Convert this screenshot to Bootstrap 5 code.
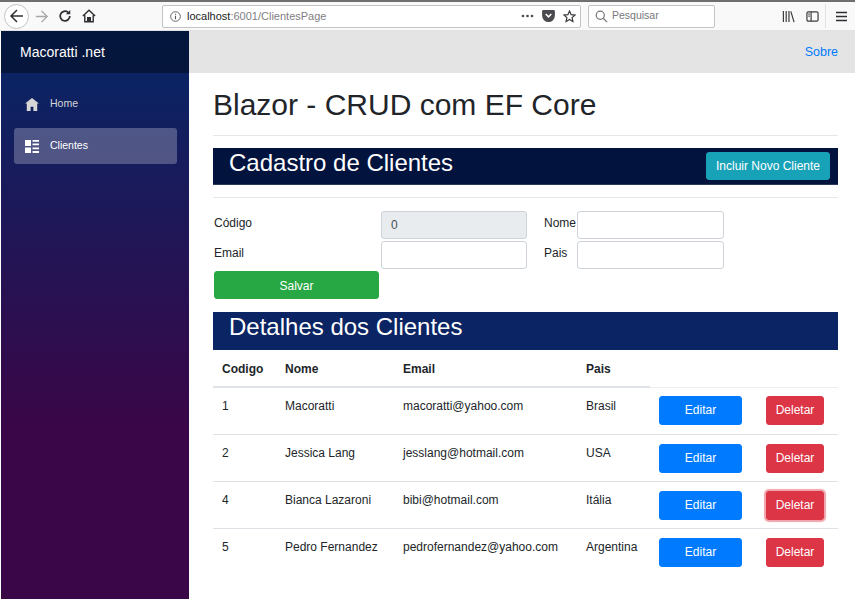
<!DOCTYPE html>
<html lang="pt">
<head>
<meta charset="utf-8">
<title>Blazor - CRUD com EF Core</title>
<link rel="stylesheet" href="https://cdn.jsdelivr.net/npm/bootstrap@5.3.0/dist/css/bootstrap.min.css">
<style>
html,body{height:100%;overflow:hidden}
body{font-family:"Liberation Sans",Arial,sans-serif;font-size:12px;color:#212529;background:#fff;width:855px;height:599px}
.tb-bar{height:31px;background:#f9f9fa;border-top:2px solid #6f6f6f;border-bottom:1px solid #e2e2e3;padding-left:4px}
.tb-back{width:25px;height:25px;border:1px solid #c4c4c6;border-radius:50%;background:#fff}
.tb-ic{display:flex;align-items:center;justify-content:center;width:24px;height:24px;color:#3d3d40}
.tb-url{width:419px;height:23px;margin-left:61px;background:#fff;border:1px solid #c3c3c6;border-radius:2px;font-size:11px;color:#808085;padding:0 4px 0 7px}
.tb-url b{font-weight:400;color:#1c1b22}
.tb-info{margin-right:6px}
.tb-search{width:127px;height:23px;margin-left:7px;background:#fff;border:1px solid #c3c3c6;border-radius:2px;font-size:10.5px;color:#77777c;padding:0 6px}
.tb-end{margin-left:auto;padding-right:2px}
.tb-sep{width:1px;height:24px;background:#e2e2e3;margin:0 3px 0 1px}
.app-shell{height:568px}
.side-col{width:188px;margin-left:1px;flex:none;background:linear-gradient(180deg,#052767 0%,#3a0647 70%)}
.side-brand{height:42px;background:rgba(0,0,0,.4);color:#fff;font-size:14px;padding-left:19px}
.side-nav{padding-top:13px;padding-left:13px;padding-right:12px}
.side-link{height:36px;margin-bottom:6px;font-size:10.5px;color:#d7d7d7;border-radius:3px;padding-left:11px;gap:11px}
.side-link.is-on{background:rgba(255,255,255,.25);color:#fff}
.main-col{min-width:0}
.top-strip{height:42px;background:#e4e4e4;padding-right:17px}
.top-strip a{font-size:12.5px;color:#007bff;text-decoration:none}
.page-body{padding:0 17px 0 24px}
.page-title{font-size:30px;line-height:36px;font-weight:400;margin:14px 0 12px}
.rule-line{height:1px;background:#e6e6e6;margin:0}
.rule-gap{margin-top:12px}
.band{height:37px;padding:0 8px 0 16px;color:#fff;font-size:24px;line-height:30px}
.band-a{background:#02133e;margin-top:12px;border-bottom:1px solid #2c3a5e}
.band-b{background:#0b2463;height:38px;margin-top:13px;line-height:30px}
.band span{display:block;align-self:flex-start}
.btn-add{font-size:12px;line-height:14px;height:28px;padding:0 9px;background:#17a2b8;border-color:#17a2b8;color:#fff;border-radius:3px;margin-top:4px}
.form-area{display:grid;grid-template-columns:167px 147px 16px 33px 147px;grid-auto-rows:28px;row-gap:2px;margin-top:13px;padding-left:1px}
.form-area label{padding-top:3px;white-space:nowrap}
.form-area input{height:28px;font-size:12px;padding:0 9px;border:1px solid #ced4da;border-radius:3px;color:#495057;width:146px}
.form-area input.wide-in{width:147px}
.form-area input:disabled{background:#e9ecef}
.gap-cell{grid-column:3}
.btn-save{grid-column:1;width:165px;height:28px;font-size:12px;padding:1px 0 0;background:#28a745;border-color:#28a745;color:#fff;border-radius:3px}
.data-grid{width:625px;table-layout:fixed;font-size:12px;margin:0;border-collapse:collapse}
.data-grid th{height:37px;padding:2px 9px 0;vertical-align:middle;font-size:12px;border-bottom:2px solid #dee2e6;color:#212529}
.data-grid th.th-soft{border-bottom:1px solid #eceeef}
.data-grid td{height:47px;padding:9px 9px 0;vertical-align:top;border-bottom:1px solid #dee2e6;color:#212529}
.data-grid tr:last-child td{border-bottom:0}
.data-grid td.act{padding-top:9px}
.data-grid tr:first-child td.act{padding-top:8px}
.btn-edit,.btn-del{height:29px;font-size:12px;padding:0;border-radius:3px;color:#fff}
.btn-edit{width:83px;background:#007bff;border-color:#007bff}
.btn-del{width:58px;background:#dc3545;border-color:#dc3545}
.btn-glow{box-shadow:0 0 1px 2px rgba(220,53,69,.45)}
</style>
</head>
<body>
<div class="tb-bar d-flex align-items-center">
  <span class="tb-back d-flex align-items-center justify-content-center"><svg width="16" height="16" viewBox="0 0 16 16" fill="none" stroke="#2f2f33" stroke-width="1.5"><path d="M14 8H2M8 2 2 8l6 6"/></svg></span>
  <span class="tb-ic"><svg width="15" height="15" viewBox="0 0 16 16" fill="none" stroke="#a8a8ab" stroke-width="1.5"><path d="M2 8h12M8 2l6 6-6 6"/></svg></span>
  <span class="tb-ic"><svg width="14" height="14" viewBox="0 0 16 16" fill="none" stroke="#2f2f33" stroke-width="2"><path d="M13.500 8A5.500 5.500 0 1 1 11.500 3.800"/><path d="M14 1v5H9" fill="#2f2f33" stroke="none"/></svg></span>
  <span class="tb-ic"><svg width="14" height="14" viewBox="0 0 16 16" fill="none" stroke="#2f2f33" stroke-width="1.600"><path d="M1 8l7-6.500L15 8M3.200 7v7.500h9.600V7"/><path d="M6.500 14.500V10h3v4.500" fill="#2f2f33"/></svg></span>
  <div class="tb-url d-flex align-items-center">
    <svg class="tb-info" width="11" height="11" viewBox="0 0 16 16" fill="none" stroke="#55555a" stroke-width="1.300"><circle cx="8" cy="8" r="7"/><path d="M8 7v5M8 4v1.600" stroke-width="1.600"/></svg>
    <span><b>localhost</b>:6001/ClientesPage</span>
    <span class="ms-auto d-flex align-items-center gap-2">
      <svg width="13" height="4" viewBox="0 0 13 4" fill="#4a4a4f"><circle cx="2" cy="2" r="1.300"/><circle cx="6.500" cy="2" r="1.300"/><circle cx="11" cy="2" r="1.300"/></svg>
      <svg width="13" height="12" viewBox="0 0 16 15"><path d="M1.500 0h13A1.500 1.500 0 0 1 16 1.500V7a8 8 0 0 1-16 0V1.500A1.500 1.500 0 0 1 1.500 0z" fill="#4a4a4f"/><path d="M4.500 5 8 8.500 11.500 5" fill="none" stroke="#fff" stroke-width="2"/></svg>
      <svg width="13" height="13" viewBox="0 0 16 16" fill="none" stroke="#3a3a3f" stroke-width="1.500"><path d="M8 1.300l2 4.400 4.800.5-3.600 3.200 1 4.700L8 11.700l-4.200 2.400 1-4.700L1.200 6.200 6 5.700z"/></svg>
    </span>
  </div>
  <div class="tb-search d-flex align-items-center gap-1">
    <svg width="13" height="13" viewBox="0 0 16 16" fill="none" stroke="#77777c" stroke-width="1.500"><circle cx="6.500" cy="6.500" r="5"/><path d="M10.200 10.200 15 15"/></svg>
    <span>Pesquisar</span>
  </div>
  <div class="tb-end d-flex align-items-center">
    <span class="tb-ic"><svg width="13" height="13" viewBox="0 0 14 14" fill="none" stroke="#3d3d40" stroke-width="1.300"><path d="M1.500 1v12M4.500 1v12M7.500 1v12M9.500 1.500l3.500 11.500"/></svg></span>
    <span class="tb-ic"><svg width="13" height="13" viewBox="0 0 14 14" fill="none" stroke="#3d3d40" stroke-width="1.300"><rect x="1" y="2" width="12" height="10" rx="1.500"/><path d="M5.500 2v10"/><path d="M2.500 4.500h1.500M2.500 6.500h1.500"/></svg></span>
    <span class="tb-sep"></span>
    <span class="tb-ic"><svg width="13" height="11" viewBox="0 0 13 11" fill="none" stroke="#2f2f33" stroke-width="1.500"><path d="M1 1.500h11M1 5.500h11M1 9.500h11"/></svg></span>
  </div>
</div>
<div class="app-shell d-flex">
  <aside class="side-col">
    <div class="side-brand d-flex align-items-center">Macoratti .net</div>
    <nav class="side-nav">
      <div class="side-link d-flex align-items-center">
        <svg width="14" height="13" viewBox="0 0 8 7.500" fill="#d7d7d7"><path d="M4 0 0 3.200h1v4.300h2.200V5h1.600v2.500H7V3.200h1z"/></svg><span>Home</span>
      </div>
      <div class="side-link is-on d-flex align-items-center">
        <svg width="14" height="13" viewBox="0 0 14 13" fill="#fff"><path d="M0 0h6v6H0zM0 7.500h6V13H0zM7.500 0H14v1.800H7.500zM7.500 3.500H14v1.800H7.500zM7.500 7.500H14v1.800H7.500zM7.500 11H14v2H7.500z"/></svg><span>Clientes</span>
      </div>
    </nav>
  </aside>
  <main class="main-col flex-grow-1">
    <div class="top-strip d-flex align-items-center justify-content-end"><a href="#">Sobre</a></div>
    <div class="page-body">
      <h1 class="page-title">Blazor - CRUD com EF Core</h1>
      <div class="rule-line"></div>
      <div class="band band-a d-flex justify-content-between"><span>Cadastro de Clientes</span><button class="btn btn-add" type="button">Incluir Novo Cliente</button></div>
      <div class="rule-line rule-gap"></div>
      <form class="form-area">
        <label for="f1">Código</label><input id="f1" value="0" disabled>
        <span class="gap-cell"></span><label for="f2">Nome</label><input id="f2" class="wide-in">
        <label for="f3">Email</label><input id="f3">
        <span class="gap-cell"></span><label for="f4">Pais</label><input id="f4" class="wide-in">
        <button class="btn btn-save" type="button">Salvar</button>
      </form>
      <div class="band band-b"><span>Detalhes dos Clientes</span></div>
      <table class="table data-grid">
        <colgroup><col style="width:63px"><col style="width:118px"><col style="width:183px"><col style="width:73px"><col style="width:107px"><col></colgroup>
        <thead><tr><th>Codigo</th><th>Nome</th><th>Email</th><th>Pais</th><th class="th-soft"></th><th class="th-soft"></th></tr></thead>
        <tbody>
          <tr><td>1</td><td>Macoratti</td><td>macoratti@yahoo.com</td><td>Brasil</td><td class="act"><button class="btn btn-edit" type="button">Editar</button></td><td class="act"><button class="btn btn-del" type="button">Deletar</button></td></tr>
          <tr><td>2</td><td>Jessica Lang</td><td>jesslang@hotmail.com</td><td>USA</td><td class="act"><button class="btn btn-edit" type="button">Editar</button></td><td class="act"><button class="btn btn-del" type="button">Deletar</button></td></tr>
          <tr><td>4</td><td>Bianca Lazaroni</td><td>bibi@hotmail.com</td><td>Itália</td><td class="act"><button class="btn btn-edit" type="button">Editar</button></td><td class="act"><button class="btn btn-del btn-glow" type="button">Deletar</button></td></tr>
          <tr><td>5</td><td>Pedro Fernandez</td><td>pedrofernandez@yahoo.com</td><td>Argentina</td><td class="act"><button class="btn btn-edit" type="button">Editar</button></td><td class="act"><button class="btn btn-del" type="button">Deletar</button></td></tr>
        </tbody>
      </table>
    </div>
  </main>
</div>
<script src="https://cdn.jsdelivr.net/npm/bootstrap@5.3.0/dist/js/bootstrap.bundle.min.js"></script>
</body>
</html>
